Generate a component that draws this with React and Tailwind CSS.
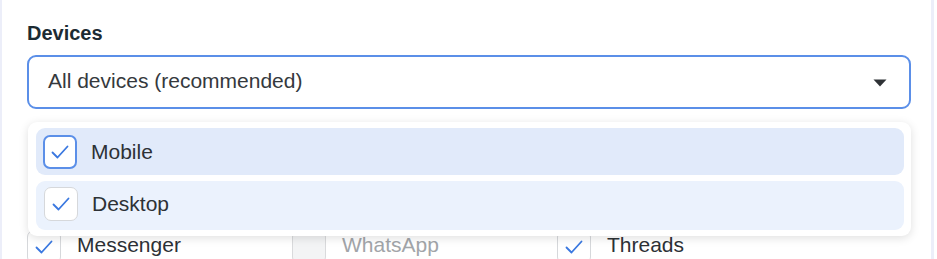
import React, { useState } from 'react';

const Check = ({ className = '' }) => (
  <svg viewBox="0 0 24 24" className={className} fill="none">
    <path d="M4.5 12.5 L9.5 17.5 L19.5 6.5" stroke="#3a78e0" strokeWidth="1.8" strokeLinecap="round" strokeLinejoin="round" />
  </svg>
);

const Box = ({ checked, focused, disabled }) => (
  <span
    className={
      'flex items-center justify-center w-[34px] h-[34px] shrink-0 rounded-[7px] ' +
      (focused
        ? 'border-2 border-[#5b8fe8] bg-white'
        : disabled
        ? 'border border-[#d9dadc] bg-[#f3f4f5]'
        : 'border border-[#d6d8db] bg-white')
    }
  >
    {checked && <Check className="w-[24px] h-[24px]" />}
  </span>
);

const App = () => {
  const [devices, setDevices] = useState({ mobile: true, desktop: true });

  const toggle = (key) => setDevices((prev) => ({ ...prev, [key]: !prev[key] }));

  const platforms = [
    { name: 'Messenger', checked: true },
    { name: 'WhatsApp', checked: false, disabled: true },
    { name: 'Threads', checked: true },
  ];

  return (
    <div
      className="h-[259px] w-[937px] overflow-hidden bg-white"
      style={{ fontFamily: '"Liberation Sans", Arial, sans-serif' }}
    >
      <div className="relative h-full w-[934px] border-l-2 border-r-[3px] border-[#eceef9] pl-[25px] pr-[20px] pt-[21px]">
        <div className="text-[20px] leading-[24px] font-bold text-[#1c2b33]">Devices</div>

        <button className="mt-[10px] flex w-[884px] h-[54px] items-center justify-between rounded-[9px] border-2 border-[#5b8fe8] bg-white pl-[19px] pr-[22px] pb-[3px] text-left">
          <span className="text-[21px] text-[#35393d]">All devices (recommended)</span>
          <svg viewBox="0 0 14 8" className="w-[14px] h-[8px] mt-[4px]">
            <path d="M0.5 0.5 H13.5 L7 7.5 Z" fill="#2f3236" />
          </svg>
        </button>

        {/* platform checkboxes, mostly covered by the open menu */}
        <div className="mt-[121px] grid grid-cols-[265px_265px_265px]">
          {platforms.map((p) => (
            <div key={p.name} className="flex items-center gap-[16px]">
              <Box checked={p.checked} disabled={p.disabled} />
              <span className={'text-[21px] leading-[24px] pb-[4px] ' + (p.disabled ? 'text-[#a2a5a9]' : 'text-[#2d3136]')}>{p.name}</span>
            </div>
          ))}
        </div>

        {/* open device menu */}
        <div className="absolute left-[26px] top-[122px] w-[883px] rounded-[9px] bg-white p-[6px] pl-[8px] pr-[7px] shadow-[0_2px_10px_rgba(0,0,0,0.13)]">
          <div className="flex flex-col gap-[6px]">
            <div
              onClick={() => toggle('mobile')}
              className="flex h-[47px] items-center gap-[14px] rounded-[9px] bg-[#e1eafa] pl-[7px] cursor-pointer"
            >
              <Box checked={devices.mobile} focused />
              <span className="text-[21px] text-[#2d3136]">Mobile</span>
            </div>
            <div
              onClick={() => toggle('desktop')}
              className="flex h-[49px] items-center gap-[14px] rounded-[9px] bg-[#ebf2fd] pl-[8px] pb-[3px] cursor-pointer"
            >
              <Box checked={devices.desktop} />
              <span className="text-[21px] text-[#2d3136]">Desktop</span>
            </div>
          </div>
        </div>
      </div>
    </div>
  );
};

export default App;
